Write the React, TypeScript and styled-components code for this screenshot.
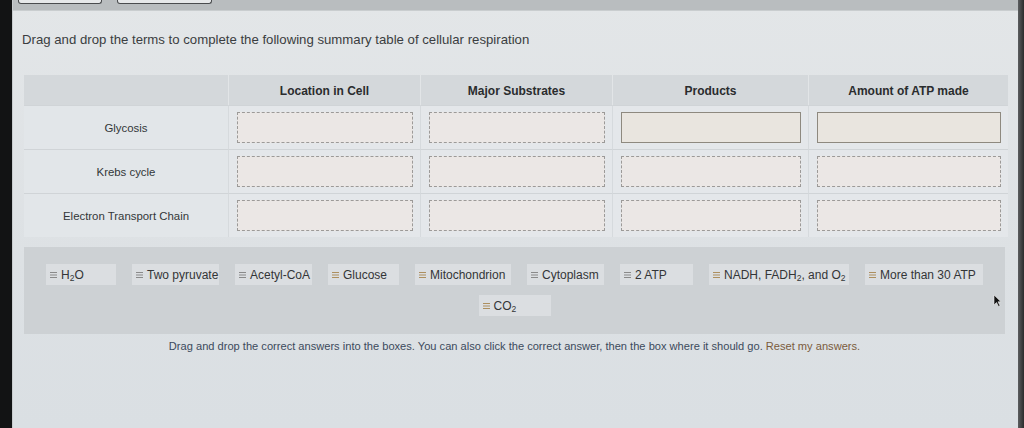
import React from "react";
import styled, { createGlobalStyle } from "styled-components";

const Global = createGlobalStyle`
  html, body { margin: 0; padding: 0; background: #dfe3e6; }
  body { font-family: "Liberation Sans", Arial, sans-serif; }
  #root { width: 1024px; height: 428px; overflow: hidden; }
`;

const Frame = styled.div`
  display: flex;
  width: 1024px;
  height: 428px;
  position: relative;
`;

const LeftBezel = styled.div`
  width: 12px;
  background: #121314;
  border-right: 1px solid #c8ccce;
`;

const RightBezel = styled.div`
  width: 6px;
  background: linear-gradient(to right, #5c5e60, #2a2b2c);
`;

const Screen = styled.div`
  flex: 1;
  display: flex;
  flex-direction: column;
  background: linear-gradient(to bottom, #e3e6e8, #dde1e4 60%, #dadfe3);
`;

const TopBar = styled.div`
  height: 10px;
  background: #b9bdbf;
  border-bottom: 1px solid #c9cdcf;
  display: flex;
  align-items: flex-end;
  gap: 15px;
  padding-left: 5px;
`;

const TopButton = styled.div<{ $w: number }>`
  width: ${(p) => p.$w}px;
  height: 8px;
  margin-bottom: 6px;
  background: #e6e8e9;
  border: 1.5px solid #4a4c4e;
  border-top: none;
  border-radius: 0 0 3px 3px;
`;

const Content = styled.div`
  padding: 20px 0 0 9px;
  display: flex;
  flex-direction: column;
`;

const Title = styled.div`
  font-size: 13.2px;
  color: #3a3d40;
  line-height: 18px;
  margin-bottom: 26px;
`;

const Table = styled.div`
  margin-left: 2px;
  width: 984px;
  display: grid;
  grid-template-columns: 204px 192px 192px 196px 200px;
  grid-template-rows: 30px 44px 44px 44px;
  background: #d2d6d9;
`;

const HeadCell = styled.div<{ $first?: boolean }>`
  background: #d4d8db;
  border-left: ${(p) => (p.$first ? "none" : "1px solid #e2e5e7")};
  display: flex;
  align-items: center;
  justify-content: center;
  font-weight: bold;
  font-size: 12px;
  color: #2a2c2e;
  padding-top: 2px;
`;

const LabelCell = styled.div`
  background: #e2e6e9;
  border-top: 1px solid #d0d4d7;
  display: flex;
  align-items: center;
  justify-content: center;
  font-size: 11.4px;
  color: #333638;
`;

const DropCell = styled.div`
  background: #e4e7ea;
  border-top: 1px solid #d0d4d7;
  border-left: 1px solid #d6dadd;
  padding: 6px 7px 6px 8px;
  display: flex;
`;

const DropBox = styled.div<{ $solid?: boolean }>`
  flex: 1;
  background: ${(p) => (p.$solid ? "#e9e5df" : "#ebe7e5")};
  border: ${(p) =>
    p.$solid ? "1.5px solid #8e897f" : "1px dashed #9c9a98"};
`;

const Bank = styled.div`
  margin-top: 10px;
  margin-left: 2px;
  width: 981px;
  background: #cdd1d4;
  padding: 17px 0 18px 0;
  display: flex;
  flex-wrap: wrap;
  justify-content: center;
  column-gap: 16px;
  row-gap: 10px;
  box-sizing: border-box;
`;

const Chip = styled.div<{ $w: number }>`
  width: ${(p) => p.$w}px;
  height: 21px;
  background: #dbdee1;
  display: flex;
  align-items: center;
  gap: 4px;
  padding-left: 4px;
  box-sizing: border-box;
  font-size: 12px;
  color: #333537;
  white-space: nowrap;
`;

const Sub = styled.sub`
  font-size: 8.5px;
  vertical-align: -2px;
  line-height: 0;
`;

const Help = styled.div`
  width: 981px;
  margin-left: 2px;
  text-align: center;
  font-size: 11.1px;
  color: #3b4a5c;
  margin-top: 6px;
`;

const ResetLink = styled.span`
  color: #7a5b3c;
`;

const Cursor = styled.svg`
  position: absolute;
  left: 993px;
  top: 294px;
`;

const Grip = ({ warm }: { warm?: boolean }) => (
  <svg width="7" height="8" viewBox="0 0 7 8">
    <g stroke={warm ? "#ad8f5f" : "#8a8a8a"} strokeWidth="1">
      <line x1="0" y1="1.5" x2="7" y2="1.5" />
      <line x1="0" y1="4" x2="7" y2="4" />
      <line x1="0" y1="6.5" x2="7" y2="6.5" />
    </g>
  </svg>
);

const headers = ["Location in Cell", "Major Substrates", "Products", "Amount of ATP made"];
const rows = ["Glycosis", "Krebs cycle", "Electron Transport Chain"];

type ChipDef = { w: number; warm?: boolean; label: React.ReactNode };
const chips: ChipDef[] = [
  { w: 70, label: <>H<Sub>2</Sub>O</> },
  { w: 87, label: "Two pyruvate" },
  { w: 77, label: "Acetyl-CoA" },
  { w: 71, warm: true, label: "Glucose" },
  { w: 96, warm: true, label: "Mitochondrion" },
  { w: 77, label: "Cytoplasm" },
  { w: 73, label: "2 ATP" },
  { w: 140, warm: true, label: <>NADH, FADH<Sub>2</Sub>, and O<Sub>2</Sub></> },
  { w: 118, warm: true, label: "More than 30 ATP" },
  { w: 72, warm: true, label: <>CO<Sub>2</Sub></> },
];

export default function App() {
  return (
    <>
      <Global />
      <Frame>
        <LeftBezel />
        <Screen>
          <TopBar>
            <TopButton $w={82} />
            <TopButton $w={93} />
          </TopBar>
          <Content>
            <Title>
              Drag and drop the terms to complete the following summary table of cellular respiration
            </Title>
            <Table>
              <HeadCell $first />
              {headers.map((h) => (
                <HeadCell key={h}>{h}</HeadCell>
              ))}
              {rows.map((r, ri) => (
                <React.Fragment key={r}>
                  <LabelCell>{r}</LabelCell>
                  {headers.map((h, ci) => (
                    <DropCell key={h}>
                      <DropBox $solid={ri === 0 && ci >= 2} />
                    </DropCell>
                  ))}
                </React.Fragment>
              ))}
            </Table>
            <Bank>
              {chips.map((c, i) => (
                <Chip key={i} $w={c.w}>
                  <Grip warm={c.warm} />
                  <span>{c.label}</span>
                </Chip>
              ))}
            </Bank>
            <Help>
              Drag and drop the correct answers into the boxes. You can also click the correct answer, then the box where it should go.{" "}
              <ResetLink>Reset my answers.</ResetLink>
            </Help>
          </Content>
        </Screen>
        <RightBezel />
        <Cursor width="9" height="13" viewBox="0 0 9 13">
          <path d="M1 1 L1 11 L3.5 8.5 L5.5 12.5 L7 11.8 L5 7.8 L8 7.8 Z" fill="#111" stroke="#eee" strokeWidth="0.6" />
        </Cursor>
      </Frame>
    </>
  );
}
